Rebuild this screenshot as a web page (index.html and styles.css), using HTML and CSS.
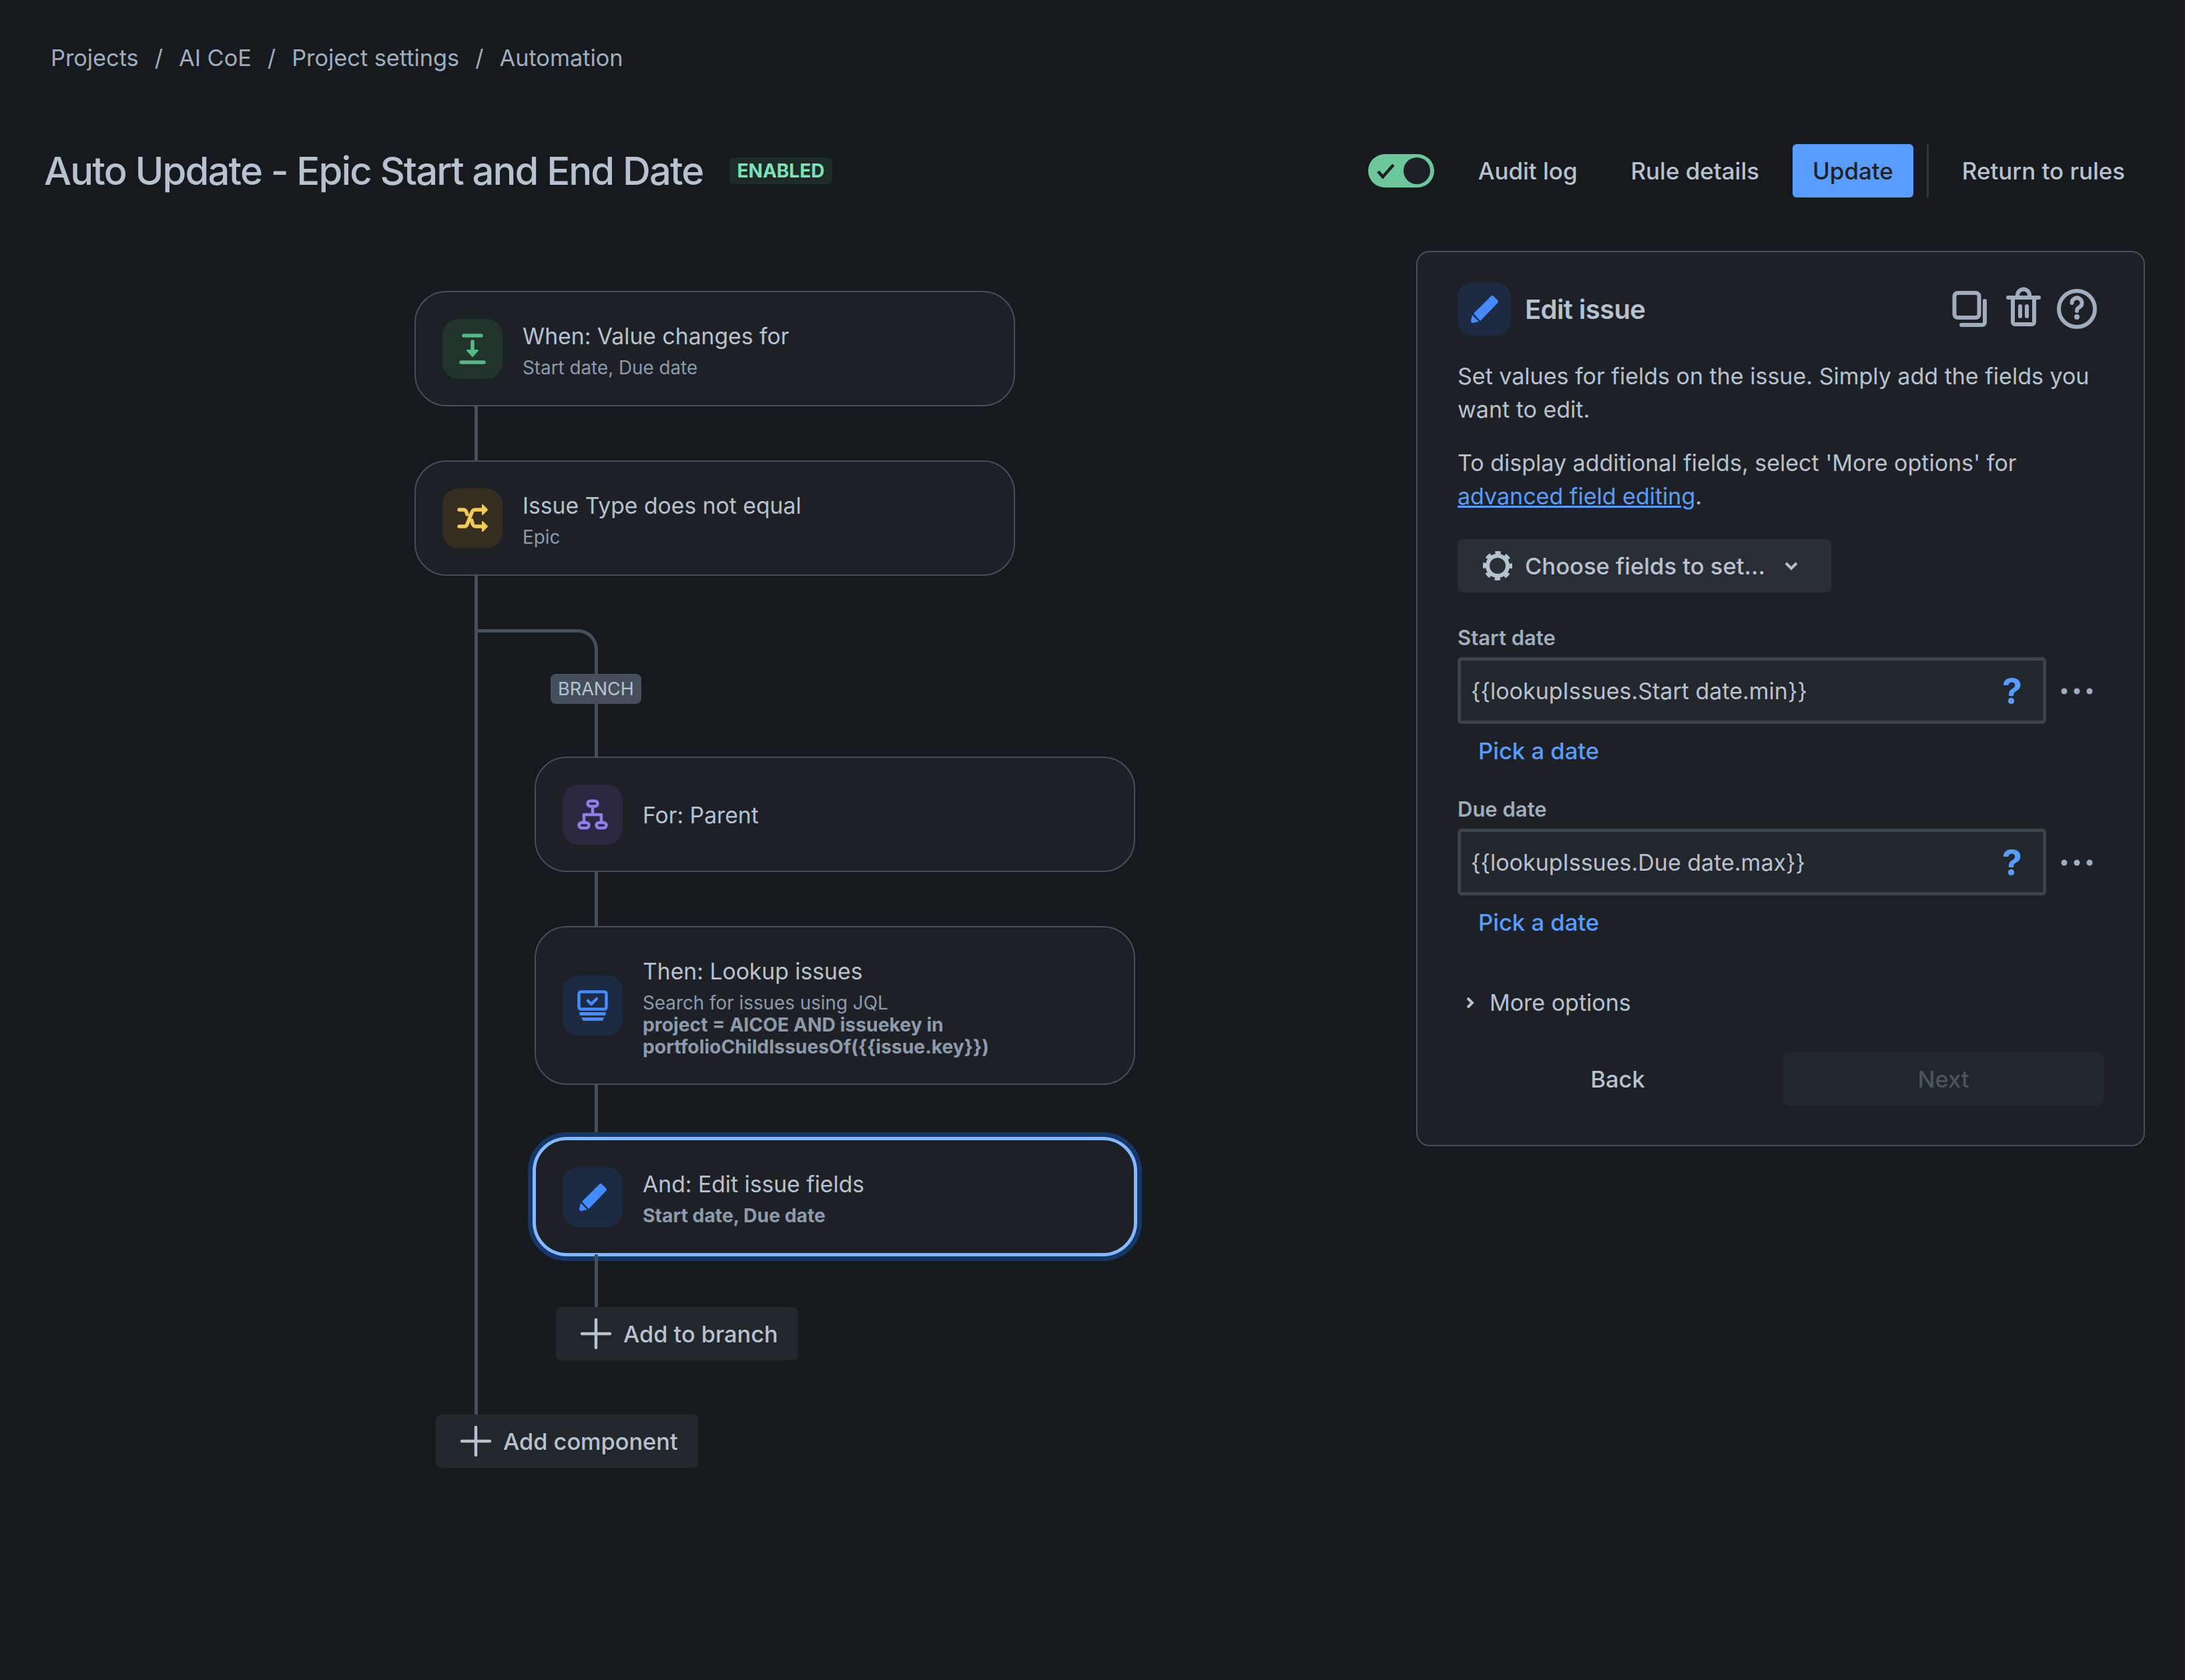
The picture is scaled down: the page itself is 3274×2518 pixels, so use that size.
FILE: index.html
```html
<!DOCTYPE html>
<html lang="en">
<head>
<meta charset="UTF-8">
<title>Auto Update - Epic Start and End Date</title>
<link rel="stylesheet" href="styles.css">
</head>
<body>
<nav class="crumbs">
    <span>Projects</span><span>/</span><span>AI CoE</span><span>/</span><span>Project settings</span><span>/</span><span>Automation</span>
</nav>

<header class="rule-header">
    <h1 class="rule-title">Auto Update - Epic Start and End Date</h1>
    <span class="lozenge">ENABLED</span>
    <div class="rule-actions">
        <span class="toggle">
            <svg class="toggle-check" viewBox="0 0 30 26"><path d="M3 14l7 8L26 4"/></svg>
            <span class="toggle-knob"></span>
        </span>
        <button class="head-btn">Audit log</button>
        <button class="head-btn">Rule details</button>
        <button class="head-btn head-primary">Update</button>
        <span class="head-divider"></span>
        <button class="head-btn">Return to rules</button>
    </div>
</header>

<main class="workspace">
    <section class="canvas">
        <div class="card">
            <span class="card-icon icon-green">
                <svg viewBox="0 0 90 90"><path class="ln" d="M32 25h26M45 34v14M28 65h34"/><path class="fl" d="M37 47h16l-8 9z"/></svg>
            </span>
            <div>
                <div class="card-title">When: Value changes for</div>
                <div class="card-sub">Start date, Due date</div>
            </div>
        </div>
        <div class="link"></div>
        <div class="card">
            <span class="card-icon icon-yellow">
                <svg viewBox="0 0 90 90"><path class="ln" d="M25 57h8c2 0 3-1 4-3l7-18c1-3 2-4 5-4h13M25 32h7c2 0 3 1 4 4l1 3M44 48l1 5c1 3 2 4 5 4h12"/><path class="fl" d="M60 25l7 7-7 7zM60 50l7 7-7 7z"/></svg>
            </span>
            <div>
                <div class="card-title">Issue Type does not equal</div>
                <div class="card-sub">Epic</div>
            </div>
        </div>

        <div class="trunk">
            <div class="branch-curve"></div>
            <span class="branch-tag">BRANCH</span>
            <div class="link"></div>
            <div class="card">
                <span class="card-icon icon-purple">
                    <svg viewBox="0 0 90 90"><path class="ln-thin" d="M45 35v10M32 55V45h26v10"/><rect class="ln-thin" x="37.5" y="24.5" width="15" height="8" rx="4"/><rect class="ln-thin" x="24.5" y="57" width="15" height="8" rx="4"/><rect class="ln-thin" x="50.5" y="57" width="15" height="8" rx="4"/></svg>
                </span>
                <div>
                    <div class="card-title">For: Parent</div>
                </div>
            </div>
            <div class="link"></div>
            <div class="card card-tall">
                <span class="card-icon icon-blue">
                    <svg viewBox="0 0 90 90"><rect class="ln-thin" x="24.5" y="24.5" width="41" height="26" rx="3"/><path class="ln-thin" d="M38 38l5 5 8-8"/><path class="fl-flat" d="M25 55h40l-1 5H26zM28 63h34l-2 5H31z"/></svg>
                </span>
                <div>
                    <div class="card-title">Then: Lookup issues</div>
                    <div class="card-sub">Search for issues using JQL<br><b>project = AICOE AND issuekey in portfolioChildIssuesOf({{issue.key}})</b></div>
                </div>
            </div>
            <div class="link"></div>
            <div class="card card-selected">
                <span class="card-icon icon-blue">
                    <svg viewBox="-5 -5 90 90"><path class="fl-flat" d="M50 21a3 3 0 0 1 4 0l6 6a3 3 0 0 1 0 4L34 58 24 47zM22 49l10 10-9 2a3 3 0 0 1-3-3z"/></svg>
                </span>
                <div>
                    <div class="card-title">And: Edit issue fields</div>
                    <div class="card-sub"><b>Start date, Due date</b></div>
                </div>
            </div>
            <div class="link link-short"></div>
            <button class="add-btn add-branch">
                <svg class="plus" viewBox="0 0 46 46"><path d="M23 2v42M2 23h42"/></svg>Add to branch
            </button>
        </div>

        <button class="add-btn add-root">
            <svg class="plus" viewBox="0 0 46 46"><path d="M23 2v42M2 23h42"/></svg>Add component
        </button>
    </section>

    <aside class="panel">
        <div class="panel-head">
            <span class="panel-icon">
                <svg viewBox="0 0 80 80"><path class="fl-flat" d="M50 21a3 3 0 0 1 4 0l6 6a3 3 0 0 1 0 4L34 58 24 47zM22 49l10 10-9 2a3 3 0 0 1-3-3z"/></svg>
            </span>
            <h2 class="panel-title">Edit issue</h2>
            <div class="panel-tools">
                <svg viewBox="0 0 60 60"><rect x="6.5" y="6" width="37" height="37" rx="5"/><path d="M17 54h31a4 4 0 0 0 4-4V18"/></svg>
                <svg viewBox="0 0 60 60"><path d="M7 13h46M14 13v37a3 3 0 0 0 3 3h26a3 3 0 0 0 3-3V13M21 13V9.5a9 9 0 0 1 18 0V13M25 26v15M35 26v15"/></svg>
                <svg viewBox="0 0 60 60"><circle cx="30" cy="30" r="27"/><path d="M22.5 21a7.5 7.5 0 1 1 11.5 6.3c-3 2-4 2.700-4 5.700"/><circle class="dot" cx="30" cy="42" r="4"/></svg>
            </div>
        </div>

        <p class="panel-text">Set values for fields on the issue. Simply add the fields you want to edit.</p>
        <p class="panel-text panel-text-next">To display additional fields, select 'More options' for <a class="link-text">advanced field editing</a>.</p>

        <button class="choose-btn">
            <svg class="gear" viewBox="0 0 44 44"><circle class="gear-teeth" cx="22" cy="22" r="19"/><circle class="gear-ring" cx="22" cy="22" r="15"/></svg>
            <span>Choose fields to set...</span>
            <svg class="chev" viewBox="0 0 22 14"><path d="M3 3l8 8 8-8"/></svg>
        </button>

        <label class="field-label field-label-first">Start date</label>
        <div class="field-row">
            <div class="field-input">
                <span>{{lookupIssues.Start date.min}}</span>
                <span class="field-help">?</span>
            </div>
            <svg class="dots" viewBox="0 0 48 10"><circle cx="5" cy="5" r="4.500"/><circle cx="24" cy="5" r="4.500"/><circle cx="43" cy="5" r="4.500"/></svg>
        </div>
        <a class="pick-date">Pick a date</a>

        <label class="field-label">Due date</label>
        <div class="field-row">
            <div class="field-input">
                <span>{{lookupIssues.Due date.max}}</span>
                <span class="field-help">?</span>
            </div>
            <svg class="dots" viewBox="0 0 48 10"><circle cx="5" cy="5" r="4.500"/><circle cx="24" cy="5" r="4.500"/><circle cx="43" cy="5" r="4.500"/></svg>
        </div>
        <a class="pick-date">Pick a date</a>

        <div class="more-options">
            <svg class="chev-right" viewBox="0 0 14 20"><path d="M3 3l7 7-7 7"/></svg>
            <span>More options</span>
        </div>

        <div class="panel-foot">
            <button class="foot-btn">Back</button>
            <button class="foot-btn foot-disabled">Next</button>
        </div>
    </aside>
</main>
</body>
</html>
```

FILE: styles.css
```css
html, body {
    margin: 0;
    background-color: #161a1d;
}

body {
    width: 3274px;
    height: 2518px;
    overflow: hidden;
    font-family: Inter, "Noto Sans", sans-serif;
    font-size: 34px;
    color: #b6c2cf;
}

button {
    font-family: inherit;
    border: none;
    cursor: pointer;
}

/* breadcrumbs */
.crumbs {
    display: flex;
    gap: 24px;
    padding: 62px 0 0 76px;
    font-size: 34.3px;
    line-height: 50px;
    color: #9fadbc;
}

/* header */
.rule-header {
    display: flex;
    align-items: center;
    height: 80px;
    margin-top: 104px;
    padding: 0 60px 0 66px;
}

.rule-title {
    margin: 0;
    font-size: 58px;
    font-weight: 500;
    letter-spacing: -1.85px;
    line-height: 80px;
}

.lozenge {
    margin-left: 39px;
    padding: 0 12px;
    height: 40px;
    line-height: 40px;
    border-radius: 6px;
    background-color: #1c2b25;
    color: #7ee2b8;
    font-size: 28px;
    font-weight: 700;
}

.rule-actions {
    display: flex;
    align-items: center;
    gap: 20px;
    margin-left: auto;
}

.toggle {
    display: flex;
    align-items: center;
    width: 99px;
    height: 50px;
    padding: 0 6px;
    box-sizing: border-box;
    margin-right: 16px;
    border-radius: 25px;
    background-color: #6cc79a;
}

.toggle-check {
    width: 30px;
    height: 26px;
    margin-left: 6px;
    fill: none;
    stroke: #1d2125;
    stroke-width: 4.500;
}

.toggle-knob {
    width: 40px;
    height: 40px;
    margin-left: auto;
    border-radius: 50%;
    background-color: #1d2125;
}

.head-btn {
    height: 80px;
    padding: 0 30px;
    border-radius: 6px;
    background: none;
    color: #b6c2cf;
    font-size: 34.9px;
    font-weight: 500;
}

.head-primary {
    background-color: #579dff;
    color: #1d2125;
}

.head-divider {
    width: 3px;
    height: 80px;
    border-radius: 2px;
    background-color: #2f363d;
}

/* layout */
.workspace {
    display: flex;
    justify-content: space-between;
    margin-top: 80px;
    padding: 0 60px 0 621px;
}

.canvas {
    padding-top: 60px;
}

/* rule cards */
.card {
    display: flex;
    align-items: center;
    gap: 30px;
    box-sizing: border-box;
    width: 900px;
    min-height: 173px;
    padding: 38.5px 40px;
    border: 2px solid #454f59;
    border-radius: 48px;
    background-color: #1d2125;
}

.card-tall {
    min-height: 238px;
}

.card-selected {
    border-color: #85b8ff;
    box-shadow: 0 0 0 3px #85b8ff, 0 0 0 10px #143768;
}

.card-icon {
    flex: none;
    width: 90px;
    height: 90px;
    border-radius: 24px;
}

.card-icon svg {
    display: block;
    width: 90px;
    height: 90px;
}

.icon-green { background-color: #21332b; color: #55b985; }
.icon-yellow { background-color: #352e20; color: #f3cb52; }
.icon-purple { background-color: #2b273f; color: #8f7ee7; }
.icon-blue { background-color: #1c2b41; color: #428cff; }

.ln, .ln-thin {
    fill: none;
    stroke: currentColor;
    stroke-linecap: round;
    stroke-linejoin: round;
    stroke-width: 5.500;
}

.ln-thin {
    stroke-width: 4.500;
}

.fl {
    fill: currentColor;
    stroke: currentColor;
    stroke-width: 2;
    stroke-linejoin: round;
}

.fl-flat {
    fill: #428cff;
}

.card-title {
    margin-top: 2px;
    line-height: 50px;
    font-size: 33.7px;
}

.card-sub {
    margin-top: 6px;
    width: 620px;
    font-size: 27.8px;
    line-height: 33px;
    color: #8c9bab;
}

.card-sub b {
    font-size: 28.3px;
    font-weight: 700;
}

/* connector lines */
.link {
    width: 5px;
    height: 81px;
    margin-left: 90px;
    background-color: #454f59;
}

.link-short {
    height: 79px;
}

.trunk {
    margin-left: 90px;
    padding: 80px 0 81px 85px;
    border-left: 5px solid #454f59;
}

.branch-curve {
    box-sizing: border-box;
    width: 180px;
    height: 67px;
    margin-left: -85px;
    border-top: 5px solid #454f59;
    border-right: 5px solid #454f59;
    border-top-right-radius: 30px;
}

.branch-tag {
    display: block;
    width: 136px;
    height: 45px;
    margin: 0 0 -2px 24px;
    border-radius: 8px;
    background-color: #454f59;
    color: #b6c2cf;
    font-size: 27px;
    line-height: 45px;
    text-align: center;
}

/* add buttons */
.add-btn {
    display: flex;
    align-items: center;
    gap: 18px;
    height: 80px;
    padding: 0 30px 0 37px;
    margin-left: 32px;
    border-radius: 8px;
    background-color: #22272b;
    color: #b6c2cf;
    font-size: 34.3px;
    font-weight: 500;
}

.plus {
    width: 46px;
    height: 46px;
    fill: none;
    stroke: #b6c2cf;
    stroke-width: 4.500;
    stroke-linecap: round;
}

/* side panel */
.panel {
    box-sizing: border-box;
    width: 1092px;
    height: 1342px;
    padding: 45px 60px 0;
    border: 2px solid #454f59;
    border-radius: 20px;
    background-color: #1d2125;
}

.panel-head {
    display: flex;
    align-items: center;
    height: 80px;
}

.panel-icon {
    width: 80px;
    height: 80px;
    border-radius: 22px;
    background-color: #1c2b41;
}

.panel-icon svg {
    display: block;
    width: 80px;
    height: 80px;
}

.panel-title {
    margin: 0 0 0 21px;
    font-size: 40px;
    font-weight: 600;
    letter-spacing: -0.6px;
}

.panel-tools {
    display: flex;
    gap: 20px;
    margin-left: auto;
    padding-right: 10px;
}

.panel-tools svg {
    width: 60px;
    height: 60px;
    overflow: visible;
    fill: none;
    stroke: #9fadbc;
    stroke-width: 6;
    stroke-linecap: round;
    stroke-linejoin: round;
}

.panel-tools .dot {
    fill: #9fadbc;
    stroke: none;
}

.panel-text {
    margin: 36px 0 0;
    line-height: 50px;
}

.panel-text-next {
    margin-top: 30px;
}

.link-text {
    color: #579dff;
    text-decoration: underline;
}

.choose-btn {
    display: flex;
    align-items: center;
    width: 560px;
    height: 80px;
    margin-top: 39px;
    padding: 0 0 0 38px;
    border-radius: 8px;
    background-color: #282e33;
    color: #b6c2cf;
    font-size: 34.6px;
    font-weight: 500;
}

.gear {
    width: 44px;
    height: 44px;
    margin-right: 19px;
    fill: none;
}

.gear-ring {
    stroke: #b6c2cf;
    stroke-width: 6;
}

.gear-teeth {
    stroke: #b6c2cf;
    stroke-width: 6;
    stroke-dasharray: 8 6.92;
    stroke-dashoffset: 4;
}

.chev {
    width: 22px;
    height: 14px;
    margin-left: 28px;
    fill: none;
    stroke: #b6c2cf;
    stroke-width: 4;
}

.field-label {
    display: block;
    margin-top: 43px;
    font-size: 31px;
    font-weight: 600;
    line-height: 40px;
    color: #9fadbc;
}

.field-label-first {
    margin-top: 48px;
}

.field-row {
    display: flex;
    align-items: center;
    margin-top: 9px;
}

.field-input {
    display: flex;
    align-items: center;
    justify-content: space-between;
    box-sizing: border-box;
    width: 882px;
    height: 100px;
    padding: 0 31px 0 15px;
    border: 5px solid #3b444c;
    border-radius: 6px;
    background-color: #22272b;
}

.field-help {
    font-size: 54px;
    font-weight: 700;
    color: #579dff;
}

.dots {
    width: 48px;
    height: 10px;
    margin: 1px 0 0 22px;
    fill: #9fadbc;
}

.pick-date {
    display: block;
    margin: 15px 0 0 31px;
    font-size: 34.6px;
    line-height: 50px;
    font-weight: 500;
    color: #579dff;
}

.more-options {
    display: flex;
    align-items: center;
    margin-top: 71px;
    padding-left: 12px;
    line-height: 50px;
}

.chev-right {
    width: 14px;
    height: 20px;
    margin-right: 22px;
    fill: none;
    stroke: #b6c2cf;
    stroke-width: 4;
}

.panel-foot {
    display: flex;
    gap: 8px;
    margin-top: 49px;
}

.foot-btn {
    width: 480px;
    height: 80px;
    border-radius: 8px;
    background: none;
    color: #b6c2cf;
    font-size: 34.5px;
    font-weight: 500;
}

.foot-disabled {
    background-color: #22272b;
    color: #4b5560;
}
```
